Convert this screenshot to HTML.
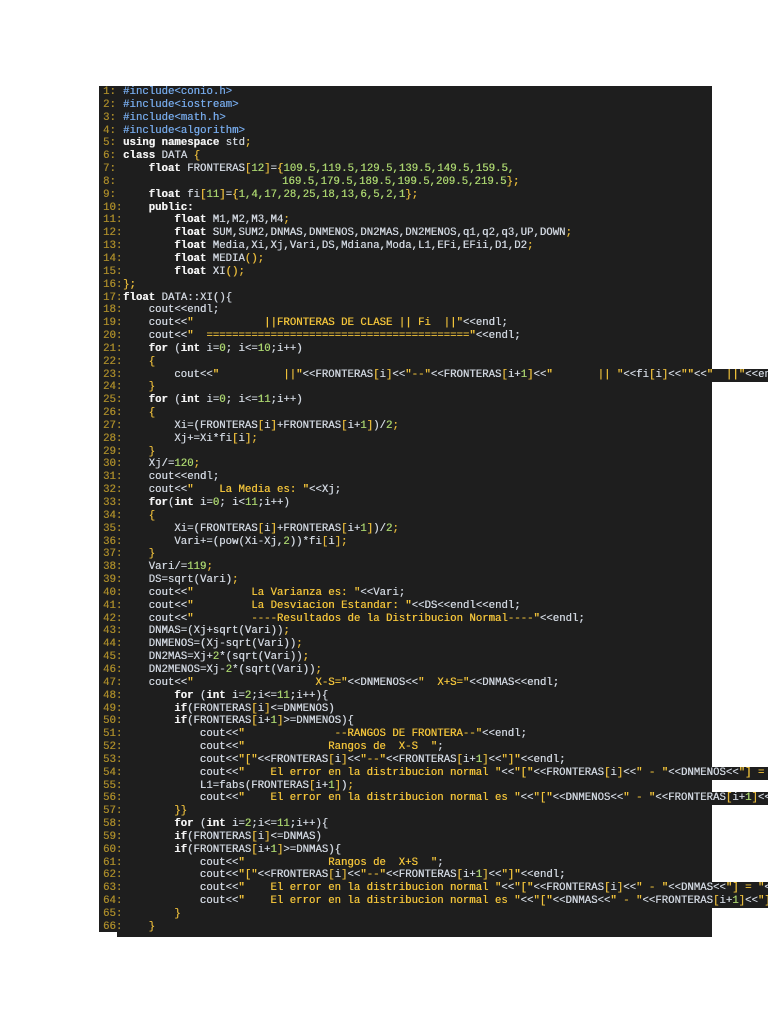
<!DOCTYPE html>
<html><head><meta charset="utf-8"><style>
html,body{margin:0;padding:0;background:#fff;width:768px;height:1024px;overflow:hidden;position:relative}
.box{position:absolute;left:117px;top:86px;width:595px;height:851px;background:#1e1e1e}
.strip{position:absolute;left:99px;top:86px;width:20px;height:846px;background:#1e1e1e}
#code{position:absolute;left:100px;top:86px;width:700px}
.l{position:relative;height:12.85px;line-height:13px;white-space:pre;font-family:"Liberation Mono",monospace;font-size:10.7px;color:#cfd5de;text-shadow:0.3px 0 0 currentColor}
.l b{position:absolute;left:3px;top:0;color:#a88a2a;font-weight:normal}
.l i{font-style:normal;position:absolute;top:0;background:#1e1e1e;padding-right:3px}
.a0{left:23px}.a1{left:48.6px}.a2{left:74.2px}.a3{left:99.8px}.ac{left:182px}
.s{color:#f0c23a}.n{color:#a9d36e}.p{color:#74a7e6}.k{color:#f2f2f2;font-weight:bold}.y{color:#e3b73a}
</style></head><body>
<div class="strip"></div><div class="box"></div>
<div id="code">
<div class="l"><b>1:</b><i class="a0 p">#include&lt;conio.h&gt;</i></div>
<div class="l"><b>2:</b><i class="a0 p">#include&lt;iostream&gt;</i></div>
<div class="l"><b>3:</b><i class="a0 p">#include&lt;math.h&gt;</i></div>
<div class="l"><b>4:</b><i class="a0 p">#include&lt;algorithm&gt;</i></div>
<div class="l"><b>5:</b><i class="a0"><span class="k">using namespace</span> std<span class="y">;</span></i></div>
<div class="l"><b>6:</b><i class="a0"><span class="k">class</span> DATA <span class="y">{</span></i></div>
<div class="l"><b>7:</b><i class="a1"><span class="k">float</span> FRONTERAS<span class="y">[</span><span class="n">12</span><span class="y">]</span>=<span class="y">{</span><span class="n">109.5,119.5,129.5,139.5,149.5,159.5,</span></i></div>
<div class="l"><b>8:</b><i class="ac n">169.5,179.5,189.5,199.5,209.5,219.5<span class="y">};</span></i></div>
<div class="l"><b>9:</b><i class="a1"><span class="k">float</span> fi<span class="y">[</span><span class="n">11</span><span class="y">]</span>=<span class="y">{</span><span class="n">1,4,17,28,25,18,13,6,5,2,1</span><span class="y">};</span></i></div>
<div class="l"><b>10:</b><i class="a1 k">public:</i></div>
<div class="l"><b>11:</b><i class="a2"><span class="k">float</span> M1,M2,M3,M4<span class="y">;</span></i></div>
<div class="l"><b>12:</b><i class="a2"><span class="k">float</span> SUM,SUM2,DNMAS,DNMENOS,DN2MAS,DN2MENOS,q1,q2,q3,UP,DOWN<span class="y">;</span></i></div>
<div class="l"><b>13:</b><i class="a2"><span class="k">float</span> Media,Xi,Xj,Vari,DS,Mdiana,Moda,L1,EFi,EFii,D1,D2<span class="y">;</span></i></div>
<div class="l"><b>14:</b><i class="a2"><span class="k">float</span> MEDIA<span class="y">();</span></i></div>
<div class="l"><b>15:</b><i class="a2"><span class="k">float</span> XI<span class="y">();</span></i></div>
<div class="l"><b>16:</b><i class="a0 y">};</i></div>
<div class="l"><b>17:</b><i class="a0"><span class="k">float</span> DATA::XI(){</i></div>
<div class="l"><b>18:</b><i class="a1">cout&lt;&lt;endl;</i></div>
<div class="l"><b>19:</b><i class="a1">cout&lt;&lt;<span class="s">"           ||FRONTERAS DE CLASE || Fi  ||"</span>&lt;&lt;endl;</i></div>
<div class="l"><b>20:</b><i class="a1">cout&lt;&lt;<span class="s">"  ========================================="</span>&lt;&lt;endl;</i></div>
<div class="l"><b>21:</b><i class="a1"><span class="k">for</span> (<span class="k">int</span> i=<span class="n">0</span>; i&lt;=<span class="n">10</span>;i++)</i></div>
<div class="l"><b>22:</b><i class="a1 y">{</i></div>
<div class="l"><b>23:</b><i class="a2">cout&lt;&lt;<span class="s">"          ||"</span>&lt;&lt;FRONTERAS<span class="y">[</span>i<span class="y">]</span>&lt;&lt;<span class="s">"--"</span>&lt;&lt;FRONTERAS<span class="y">[</span>i+<span class="n">1</span><span class="y">]</span>&lt;&lt;<span class="s">"       || "</span>&lt;&lt;fi<span class="y">[</span>i<span class="y">]</span>&lt;&lt;<span class="s">""</span>&lt;&lt;<span class="s">"  ||"</span>&lt;&lt;endl;</i></div>
<div class="l"><b>24:</b><i class="a1 y">}</i></div>
<div class="l"><b>25:</b><i class="a1"><span class="k">for</span> (<span class="k">int</span> i=<span class="n">0</span>; i&lt;=<span class="n">11</span>;i++)</i></div>
<div class="l"><b>26:</b><i class="a1 y">{</i></div>
<div class="l"><b>27:</b><i class="a2">Xi=(FRONTERAS<span class="y">[</span>i<span class="y">]</span>+FRONTERAS<span class="y">[</span>i+<span class="n">1</span><span class="y">]</span>)/<span class="n">2</span><span class="y">;</span></i></div>
<div class="l"><b>28:</b><i class="a2">Xj+=Xi*fi<span class="y">[</span>i<span class="y">]</span><span class="y">;</span></i></div>
<div class="l"><b>29:</b><i class="a1 y">}</i></div>
<div class="l"><b>30:</b><i class="a1">Xj/=<span class="n">120</span><span class="y">;</span></i></div>
<div class="l"><b>31:</b><i class="a1">cout&lt;&lt;endl;</i></div>
<div class="l"><b>32:</b><i class="a1">cout&lt;&lt;<span class="s">"    La Media es: "</span>&lt;&lt;Xj;</i></div>
<div class="l"><b>33:</b><i class="a1"><span class="k">for</span>(<span class="k">int</span> i=<span class="n">0</span>; i&lt;<span class="n">11</span>;i++)</i></div>
<div class="l"><b>34:</b><i class="a1 y">{</i></div>
<div class="l"><b>35:</b><i class="a2">Xi=(FRONTERAS<span class="y">[</span>i<span class="y">]</span>+FRONTERAS<span class="y">[</span>i+<span class="n">1</span><span class="y">]</span>)/<span class="n">2</span><span class="y">;</span></i></div>
<div class="l"><b>36:</b><i class="a2">Vari+=(pow(Xi-Xj,<span class="n">2</span>))*fi<span class="y">[</span>i<span class="y">]</span><span class="y">;</span></i></div>
<div class="l"><b>37:</b><i class="a1 y">}</i></div>
<div class="l"><b>38:</b><i class="a1">Vari/=<span class="n">119</span><span class="y">;</span></i></div>
<div class="l"><b>39:</b><i class="a1">DS=sqrt(Vari)<span class="y">;</span></i></div>
<div class="l"><b>40:</b><i class="a1">cout&lt;&lt;<span class="s">"         La Varianza es: "</span>&lt;&lt;Vari;</i></div>
<div class="l"><b>41:</b><i class="a1">cout&lt;&lt;<span class="s">"         La Desviacion Estandar: "</span>&lt;&lt;DS&lt;&lt;endl&lt;&lt;endl;</i></div>
<div class="l"><b>42:</b><i class="a1">cout&lt;&lt;<span class="s">"         ----Resultados de la Distribucion Normal----"</span>&lt;&lt;endl;</i></div>
<div class="l"><b>43:</b><i class="a1">DNMAS=(Xj+sqrt(Vari))<span class="y">;</span></i></div>
<div class="l"><b>44:</b><i class="a1">DNMENOS=(Xj-sqrt(Vari))<span class="y">;</span></i></div>
<div class="l"><b>45:</b><i class="a1">DN2MAS=Xj+<span class="n">2</span>*(sqrt(Vari))<span class="y">;</span></i></div>
<div class="l"><b>46:</b><i class="a1">DN2MENOS=Xj-<span class="n">2</span>*(sqrt(Vari))<span class="y">;</span></i></div>
<div class="l"><b>47:</b><i class="a1">cout&lt;&lt;<span class="s">"                   X-S="</span>&lt;&lt;DNMENOS&lt;&lt;<span class="s">"  X+S="</span>&lt;&lt;DNMAS&lt;&lt;endl;</i></div>
<div class="l"><b>48:</b><i class="a2"><span class="k">for</span> (<span class="k">int</span> i=<span class="n">2</span>;i&lt;=<span class="n">11</span>;i++){</i></div>
<div class="l"><b>49:</b><i class="a2"><span class="k">if</span>(FRONTERAS<span class="y">[</span>i<span class="y">]</span>&lt;=DNMENOS)</i></div>
<div class="l"><b>50:</b><i class="a2"><span class="k">if</span>(FRONTERAS<span class="y">[</span>i+<span class="n">1</span><span class="y">]</span>&gt;=DNMENOS){</i></div>
<div class="l"><b>51:</b><i class="a3">cout&lt;&lt;<span class="s">"              --RANGOS DE FRONTERA--"</span>&lt;&lt;endl;</i></div>
<div class="l"><b>52:</b><i class="a3">cout&lt;&lt;<span class="s">"             Rangos de  X-S  "</span>;</i></div>
<div class="l"><b>53:</b><i class="a3">cout&lt;&lt;<span class="s">"["</span>&lt;&lt;FRONTERAS<span class="y">[</span>i<span class="y">]</span>&lt;&lt;<span class="s">"--"</span>&lt;&lt;FRONTERAS<span class="y">[</span>i+<span class="n">1</span><span class="y">]</span>&lt;&lt;<span class="s">"]"</span>&lt;&lt;endl;</i></div>
<div class="l"><b>54:</b><i class="a3">cout&lt;&lt;<span class="s">"    El error en la distribucion normal "</span>&lt;&lt;<span class="s">"["</span>&lt;&lt;FRONTERAS<span class="y">[</span>i<span class="y">]</span>&lt;&lt;<span class="s">" - "</span>&lt;&lt;DNMENOS&lt;&lt;<span class="s">"] = "</span>&lt;&lt;</i></div>
<div class="l"><b>55:</b><i class="a3">L1=fabs(FRONTERAS<span class="y">[</span>i+<span class="n">1</span><span class="y">]</span>)<span class="y">;</span></i></div>
<div class="l"><b>56:</b><i class="a3">cout&lt;&lt;<span class="s">"    El error en la distribucion normal es "</span>&lt;&lt;<span class="s">"["</span>&lt;&lt;DNMENOS&lt;&lt;<span class="s">" - "</span>&lt;&lt;FRONTERAS<span class="y">[</span>i+<span class="n">1</span><span class="y">]</span>&lt;&lt;<span class="s">"]"</span></i></div>
<div class="l"><b>57:</b><i class="a2 y">}}</i></div>
<div class="l"><b>58:</b><i class="a2"><span class="k">for</span> (<span class="k">int</span> i=<span class="n">2</span>;i&lt;=<span class="n">11</span>;i++){</i></div>
<div class="l"><b>59:</b><i class="a2"><span class="k">if</span>(FRONTERAS<span class="y">[</span>i<span class="y">]</span>&lt;=DNMAS)</i></div>
<div class="l"><b>60:</b><i class="a2"><span class="k">if</span>(FRONTERAS<span class="y">[</span>i+<span class="n">1</span><span class="y">]</span>&gt;=DNMAS){</i></div>
<div class="l"><b>61:</b><i class="a3">cout&lt;&lt;<span class="s">"             Rangos de  X+S  "</span>;</i></div>
<div class="l"><b>62:</b><i class="a3">cout&lt;&lt;<span class="s">"["</span>&lt;&lt;FRONTERAS<span class="y">[</span>i<span class="y">]</span>&lt;&lt;<span class="s">"--"</span>&lt;&lt;FRONTERAS<span class="y">[</span>i+<span class="n">1</span><span class="y">]</span>&lt;&lt;<span class="s">"]"</span>&lt;&lt;endl;</i></div>
<div class="l"><b>63:</b><i class="a3">cout&lt;&lt;<span class="s">"    El error en la distribucion normal "</span>&lt;&lt;<span class="s">"["</span>&lt;&lt;FRONTERAS<span class="y">[</span>i<span class="y">]</span>&lt;&lt;<span class="s">" - "</span>&lt;&lt;DNMAS&lt;&lt;<span class="s">"] = "</span>&lt;&lt;</i></div>
<div class="l"><b>64:</b><i class="a3">cout&lt;&lt;<span class="s">"    El error en la distribucion normal es "</span>&lt;&lt;<span class="s">"["</span>&lt;&lt;DNMAS&lt;&lt;<span class="s">" - "</span>&lt;&lt;FRONTERAS<span class="y">[</span>i+<span class="n">1</span><span class="y">]</span>&lt;&lt;<span class="s">"]."</span></i></div>
<div class="l"><b>65:</b><i class="a2 y">}</i></div>
<div class="l"><b>66:</b><i class="a1 y">}</i></div>
</div>
</body></html>
